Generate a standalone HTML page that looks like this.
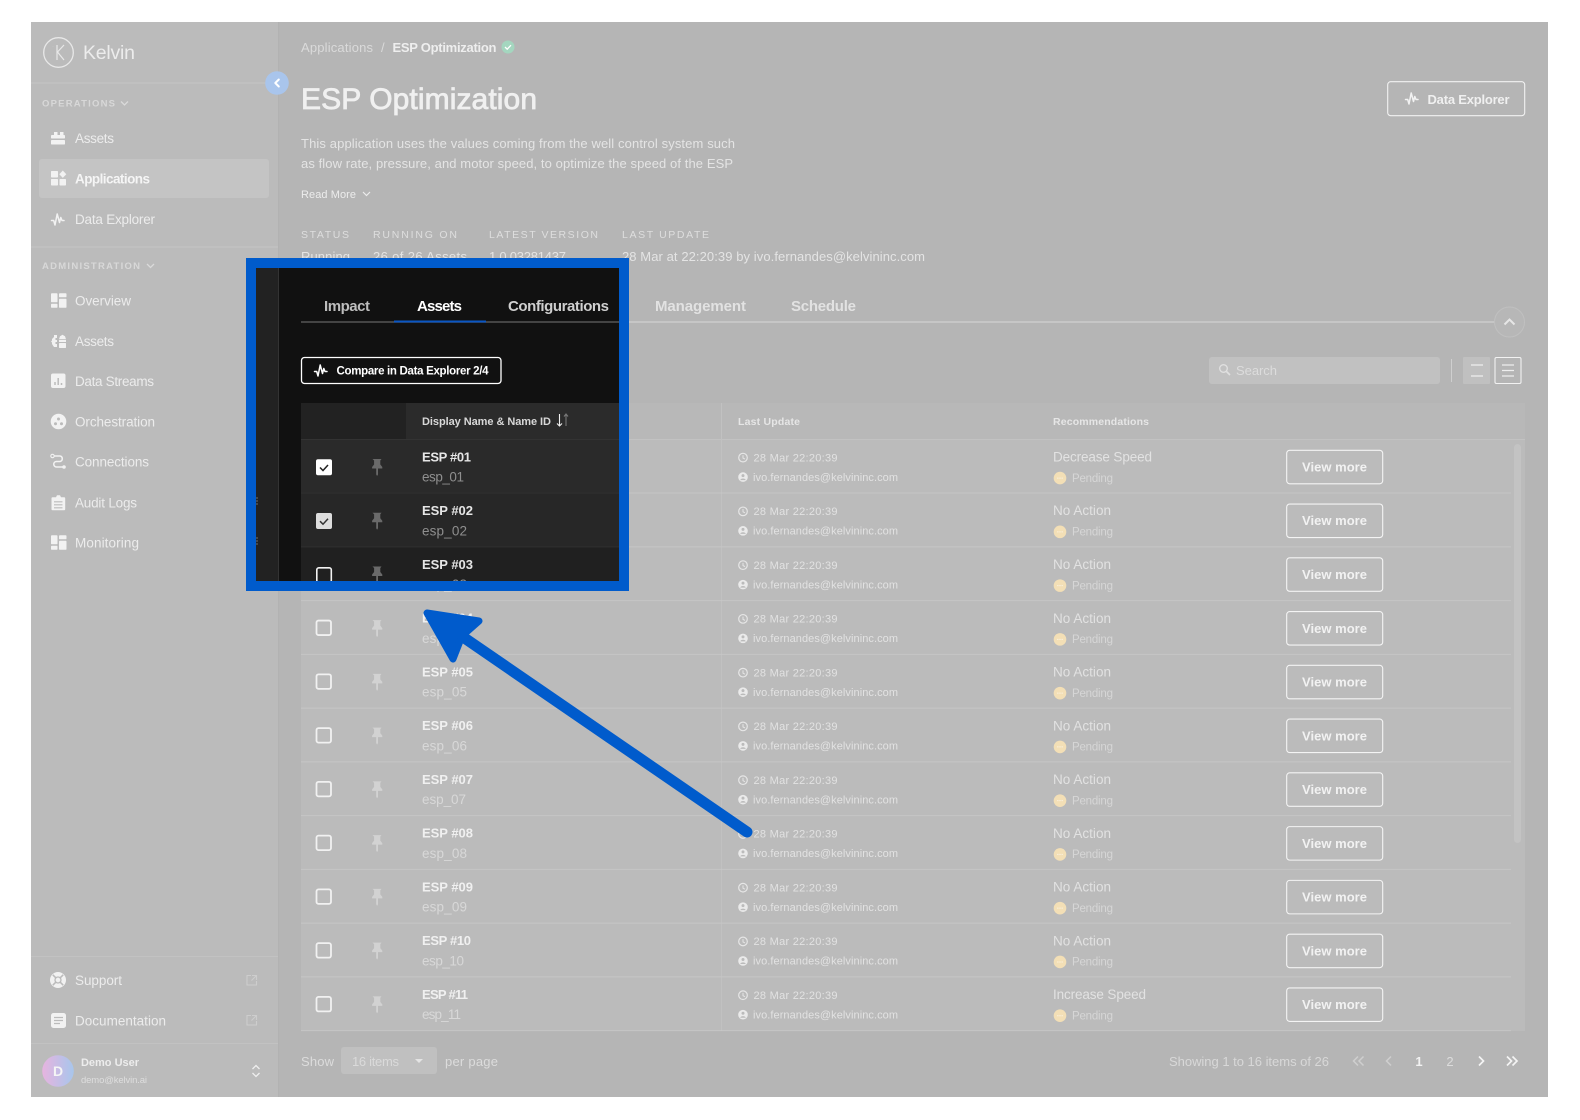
<!DOCTYPE html>
<html><head><meta charset="utf-8"><title>ESP Optimization</title>
<style>
html,body{margin:0;padding:0;background:#fff;width:1580px;height:1120px;overflow:hidden}
svg{display:block}
text{font-family:"Liberation Sans",sans-serif;fill:#e8e8e8;font-size:13px}
.nav{font-size:13.5px;fill:#ececec}
.sec{font-size:9.5px;font-weight:bold;fill:#d8d8d8}
.lbl{font-size:10.5px;fill:#dedede}
.val{font-size:13px;fill:#e4e4e4}
.tab{font-size:15px;font-weight:bold;fill:#e2e2e2}
.n{font-size:13px;font-weight:bold;fill:#f0f0f0}
.i{font-size:13.5px;fill:#d8d8d8}
.d{font-size:11px;fill:#e2e2e2}
.r{font-size:13.5px;fill:#e2e2e2}
.p{font-size:11.5px;fill:#d6d6d6}
.v{font-size:13px;font-weight:bold;fill:#f2f2f2}
.h{font-size:10.5px;font-weight:bold;fill:#e6e6e6}
.dn{font-size:13px;font-weight:bold;fill:#e6e6e6}
.di{font-size:13.5px;fill:#8f8f8f}
.ic{fill:#f2f2f2}
.st{fill:none;stroke:#f2f2f2;stroke-width:1.5;stroke-linecap:round;stroke-linejoin:round}
</style></head><body>
<svg width="1580" height="1120" viewBox="0 0 1580 1120" xmlns="http://www.w3.org/2000/svg">
<defs>
<path id="wave" d="M-7 1.500h2.200l1.300 4.500 2.200-11 2.300 8.500 1.300-5 1.200 3h2" fill="none" stroke-width="1.500" stroke-linecap="round" stroke-linejoin="round"/>
<path id="pinp" d="M-4.500-7.500h9l-1.200 1.500v4l2 2.500v1.500h-4.300v6l-.9 1.500-.9-1.500v-6h-4.100v-1.500l2-2.500v-4z"/>
<g id="quad"><rect x="51" y="-7" width="6.500" height="9" rx=".8"/><rect x="51" y="3.500" width="6.500" height="4" rx=".8"/><rect x="59" y="-7" width="7.500" height="4" rx=".8"/><rect x="59" y="-1.500" width="7.500" height="9" rx=".8"/></g>
<g id="rs">
<rect x="316.500" y="20" width="14.500" height="14.500" rx="2" fill="none" stroke="#f1f1f1" stroke-width="1.800"/>
<use href="#pinp" x="377" y="27" fill="#d2d2d2"/>
<circle cx="743" cy="18.300" r="4.300" fill="none" stroke="#e6e6e6" stroke-width="1.200"/><path d="M743 16v2.800l2 1" fill="none" stroke="#e6e6e6"/>
<circle cx="743" cy="37.800" r="4.800" fill="#eaeaea"/><circle cx="743" cy="36.300" r="1.500" fill="#bbb"/><path d="M740.200 40.800a3 2.500 0 0 1 5.600 0z" fill="#bbb"/>
<circle cx="1060" cy="38.800" r="6.300" fill="#f3dfb6"/><path d="M1057.500 38.800h.8M1059.600 38.800h.8M1061.700 38.800h.8" stroke="#fff"/>
<rect x="1286.700" y="11" width="96" height="33.500" rx="3" fill="none" stroke="#f4f4f4" stroke-width="1.100"/>
<path d="M301 53.760H1511" stroke="#c6c6c6"/>
</g>
<clipPath id="pc"><rect x="256" y="268" width="363" height="313"/></clipPath>
</defs>

<rect x="31" y="22" width="1517" height="1075" fill="#b5b5b5"/>
<!-- sidebar -->
<rect x="31" y="22" width="247" height="1075" fill="#bbb"/>
<path d="M278.500 22V1097" stroke="#b2b2b2"/>
<path d="M31 83H278M31 247H278" stroke="#c2c2c2" stroke-width="1.500"/>
<path d="M31 956.500H278M31 1043.500H278" stroke="#c2c2c2"/>
<circle cx="58.500" cy="52.500" r="14.800" fill="none" stroke="#e8e8e8" stroke-width="1.300"/>
<path d="M57 45v15M64 45l-6.500 7 6.500 8M53 46v.1" fill="none" stroke="#e8e8e8" stroke-width="1.200"/>
<text x="83" y="59" style="font-size:19.500px;fill:#ececec" textLength="52">Kelvin</text>
<circle cx="277" cy="83" r="11.800" fill="#a9c5ec"/>
<path d="M278.800 79.500l-3.500 3.500 3.500 3.500" fill="none" stroke="#fff" stroke-width="2" stroke-linecap="round" stroke-linejoin="round"/>

<text class="sec" x="42" y="106.500" textLength="73">OPERATIONS</text>
<path d="M121 101.500l3.500 3.500 3.500-3.500" fill="none" stroke="#dadada" stroke-width="1.300"/>
<g class="ic"><rect x="54" y="132" width="3.500" height="4"/><rect x="60" y="132" width="3.500" height="4"/><rect x="51" y="135" width="14" height="3.500" rx=".8"/><rect x="51" y="140" width="14" height="4.500" rx=".8"/></g>
<text class="nav" x="75" y="143" textLength="39">Assets</text>
<rect x="39" y="159" width="230" height="39" rx="3" fill="#c4c4c4"/>
<g class="ic"><rect x="51" y="171" width="7" height="6.500" rx=".7"/><rect x="51" y="179" width="7" height="6.500" rx=".7"/><rect x="59.500" y="179" width="6.500" height="6.500" rx=".7"/><path d="M62.800 170.500l3.500 3.700-3.500 3.700-3.500-3.700z"/></g>
<text class="nav" x="75" y="183.500" textLength="75" style="font-weight:bold;fill:#f5f5f5">Applications</text>
<g stroke="#f2f2f2"><use href="#wave" x="58.500" y="219"/></g>
<text class="nav" x="75" y="224" textLength="80">Data Explorer</text>

<text class="sec" x="42" y="269" textLength="98">ADMINISTRATION</text>
<path d="M147 264l3.500 3.500 3.500-3.500" fill="none" stroke="#dadada" stroke-width="1.300"/>
<g class="ic"><use href="#quad" y="300.300"/></g>
<text class="nav" x="75" y="305.300" textLength="56">Overview</text>
<g class="ic"><path d="M54 335h3v3h-1.500v2h1.500v2h-1.500v2h1.500v3h-3l-2-3v-1.500l-1-1 1-1v-1.500l2-2z"/><rect x="59" y="340" width="7" height="2" /><rect x="59" y="343" width="7" height="5" rx=".6"/><path d="M59 339.200l1-3 2.500-1.500 2.500 1.500 1 3z"/></g>
<text class="nav" x="75" y="346" textLength="39">Assets</text>
<rect x="51" y="373.500" width="14.500" height="14.500" rx="2" class="ic"/><path d="M55 385v-3M58.200 385v-7M61.500 385v-2" stroke="#bbb" stroke-width="1.500"/>
<text class="nav" x="75" y="386" textLength="79">Data Streams</text>
<circle cx="58.500" cy="421.500" r="7.800" class="ic"/><circle cx="58.500" cy="419" r="1.500" fill="#bbb"/><circle cx="55.500" cy="423.700" r="1.500" fill="#bbb"/><circle cx="61.500" cy="423.700" r="1.500" fill="#bbb"/>
<text class="nav" x="75" y="426.300" textLength="80">Orchestration</text>
<circle cx="52.500" cy="456" r="1.700" fill="none" stroke="#f2f2f2" stroke-width="1.100"/><circle cx="64" cy="467" r="1.800" class="ic"/><path d="M54.500 456H60a2.800 2.800 0 0 1 0 5.500h-3.500a2.700 2.700 0 0 0 0 5.500h6" class="st"/>
<text class="nav" x="75" y="466.700" textLength="74">Connections</text>
<path d="M52.500 497.300h3.500l1-2h3l1 2h3.200a1 1 0 0 1 1 1v11a1 1 0 0 1-1 1h-11.700a1 1 0 0 1-1-1v-11a1 1 0 0 1 1-1z" class="ic"/><path d="M54 501.800h8.500M54 504.800h8.500M54 507.800h8.500" stroke="#bbb" stroke-width="1.100"/>
<text class="nav" x="75" y="507.300" textLength="62">Audit Logs</text>
<g class="ic"><use href="#quad" y="542.300"/></g>
<text class="nav" x="75" y="547.300" textLength="64">Monitoring</text>

<circle cx="58" cy="980" r="8" class="ic"/><circle cx="58" cy="980" r="3" fill="#f2f2f2" stroke="#bbb" stroke-width="1.300"/><path d="M52.800 974.800l3 3M63.200 974.800l-3 3M52.800 985.200l3-3M63.200 985.200l-3-3" stroke="#bbb" stroke-width="1.500"/>
<text class="nav" x="75" y="985" textLength="47">Support</text>
<rect x="51" y="1013" width="15" height="15" rx="2.500" class="ic"/><path d="M54 1017.500h9M54 1020.500h9M54 1023.500h6" stroke="#bbb" stroke-width="1.300"/>
<text class="nav" x="75" y="1025.300" textLength="91">Documentation</text>
<g fill="none" stroke="#cdcdcd" stroke-width="1.100"><path d="M251 975.500h-4v9.500h9.500v-4M252 975.500h4.500v4.500M256.500 975.500l-5 5"/><path d="M251 1015.500h-4v9.500h9.500v-4M252 1015.500h4.500v4.500M256.500 1015.500l-5 5"/></g>
<defs><linearGradient id="av" x1="0" x2="1"><stop offset="0" stop-color="#e6b4df"/><stop offset="1" stop-color="#a8c6ec"/></linearGradient></defs>
<circle cx="58" cy="1071" r="15.800" fill="url(#av)"/>
<text x="58" y="1076" text-anchor="middle" style="font-size:14px;font-weight:bold;fill:#f5f5f5">D</text>
<text x="81" y="1066" style="font-size:11px;font-weight:bold;fill:#ededed" textLength="58">Demo User</text>
<text x="81" y="1083" style="font-size:9.500px;fill:#dedede" textLength="66">demo@kelvin.ai</text>
<path d="M252.500 1069l3.500-3.500 3.500 3.500M252.500 1073l3.500 3.500 3.500-3.500" fill="none" stroke="#efefef" stroke-width="1.300"/>

<!-- header -->
<text x="301" y="52" textLength="72" style="font-size:13px;fill:#dadada">Applications</text>
<text x="381" y="52" style="font-size:13px;fill:#dadada">/</text>
<text x="392.500" y="52" textLength="104" style="font-size:13px;font-weight:bold;fill:#eee">ESP Optimization</text>
<circle cx="508" cy="47" r="6.500" fill="#a4d6bf"/><path d="M505 47l2.200 2.200 3.800-4" fill="none" stroke="#fff" stroke-width="1.300"/>
<text x="301" y="109" textLength="236" style="font-size:30px;fill:#f0f0f0;stroke:#f0f0f0;stroke-width:.8">ESP Optimization</text>
<text class="val" x="301" y="148" textLength="434">This application uses the values coming from the well control system such</text>
<text class="val" x="301" y="168" textLength="432">as flow rate, pressure, and motor speed, to optimize the speed of the ESP</text>
<text x="301" y="198" textLength="55" style="font-size:11px;fill:#ececec">Read More</text>
<path d="M363 192l3.500 3.500 3.500-3.500" fill="none" stroke="#ececec" stroke-width="1.200"/>
<text class="lbl" x="301" y="238" textLength="48">STATUS</text>
<text class="lbl" x="373" y="238" textLength="84">RUNNING ON</text>
<text class="lbl" x="489" y="238" textLength="109">LATEST VERSION</text>
<text class="lbl" x="622" y="238" textLength="87">LAST UPDATE</text>
<text class="val" x="301" y="261" textLength="49">Running</text>
<text class="val" x="373" y="261" textLength="94">26 of 26 Assets</text>
<text class="val" x="489" y="261" textLength="77">1.0.03281437</text>
<text class="val" x="622" y="261" textLength="303">28 Mar at 22:20:39 by ivo.fernandes@kelvininc.com</text>
<rect x="1387.700" y="81.700" width="137" height="34" rx="3" fill="none" stroke="#f2f2f2" stroke-width="1.100"/>
<g stroke="#f2f2f2"><use href="#wave" x="1412.500" y="98"/></g>
<text x="1427.500" y="104" textLength="82" style="font-size:13px;font-weight:bold;fill:#f0f0f0">Data Explorer</text>

<text class="tab" x="655" y="311" textLength="91">Management</text>
<text class="tab" x="791" y="311" textLength="65">Schedule</text>
<path d="M301 322H1495" stroke="#c8c8c8" stroke-width="1.800"/>
<circle cx="1509.500" cy="322" r="15" fill="#b7b7b7" stroke="#c0c0c0"/>
<path d="M1504.500 324.500l5-5 5 5" fill="none" stroke="#e6e6e6" stroke-width="2"/>

<rect x="1209" y="357" width="231" height="27" rx="3" fill="#c1c1c1"/>
<circle cx="1223.500" cy="368.500" r="3.800" fill="none" stroke="#e0e0e0" stroke-width="1.400"/><path d="M1226.500 371.500l3.500 3.500" stroke="#e0e0e0" stroke-width="1.600"/>
<text x="1236" y="375" textLength="41" style="font-size:13px;fill:#dcdcdc">Search</text>
<path d="M1451.500 359v23" stroke="#cfcfcf"/>
<rect x="1463" y="357" width="27" height="27" rx="1" fill="#c0c0c0"/>
<path d="M1471 365h12M1471 376h12" stroke="#eee" stroke-width="1.200"/>
<rect x="1495" y="357.500" width="26" height="26" rx="1.500" fill="none" stroke="#f2f2f2" stroke-width="1.100"/>
<path d="M1502 365h12M1502 370.500h12M1502 376h12" stroke="#eee" stroke-width="1.200"/>

<!-- table -->
<rect x="301" y="403" width="1224" height="37" fill="#b8b8b8"/>
<rect x="301" y="440" width="1224" height="591" fill="#bbb"/>
<path d="M301 439.500H1525" stroke="#c2c2c2"/>
<path d="M721.500 403V1031" stroke="#c1c1c1"/>
<rect x="1514" y="444" width="7" height="399" rx="3.500" fill="#c3c3c3"/>
<text class="h" x="738" y="425" textLength="62">Last Update</text>
<text class="h" x="1053" y="425" textLength="96">Recommendations</text>

<g transform="translate(0,439.300)"><use href="#rs"/><text class="n" x="422" y="22" textLength="49">ESP #01</text><text class="i" x="422" y="42.200" textLength="42">esp_01</text><text class="d" x="753.500" y="22" textLength="84">28 Mar 22:20:39</text><text class="d" x="753" y="41.500" textLength="145">ivo.fernandes@kelvininc.com</text><text class="r" x="1053" y="22.200" textLength="99">Decrease Speed</text><text class="p" x="1072" y="42.600" textLength="41">Pending</text><text class="v" x="1302" y="32.200" textLength="65">View more</text></g>
<g transform="translate(0,493.060)"><use href="#rs"/><text class="n" x="422" y="22" textLength="51">ESP #02</text><text class="i" x="422" y="42.200" textLength="45">esp_02</text><text class="d" x="753.500" y="22" textLength="84">28 Mar 22:20:39</text><text class="d" x="753" y="41.500" textLength="145">ivo.fernandes@kelvininc.com</text><text class="r" x="1053" y="22.200" textLength="58">No Action</text><text class="p" x="1072" y="42.600" textLength="41">Pending</text><text class="v" x="1302" y="32.200" textLength="65">View more</text></g>
<g transform="translate(0,546.820)"><use href="#rs"/><text class="n" x="422" y="22" textLength="51">ESP #03</text><text class="i" x="422" y="42.200" textLength="45">esp_03</text><text class="d" x="753.500" y="22" textLength="84">28 Mar 22:20:39</text><text class="d" x="753" y="41.500" textLength="145">ivo.fernandes@kelvininc.com</text><text class="r" x="1053" y="22.200" textLength="58">No Action</text><text class="p" x="1072" y="42.600" textLength="41">Pending</text><text class="v" x="1302" y="32.200" textLength="65">View more</text></g>
<g transform="translate(0,600.580)"><use href="#rs"/><text class="n" x="422" y="22" textLength="51">ESP #04</text><text class="i" x="422" y="42.200" textLength="45">esp_04</text><text class="d" x="753.500" y="22" textLength="84">28 Mar 22:20:39</text><text class="d" x="753" y="41.500" textLength="145">ivo.fernandes@kelvininc.com</text><text class="r" x="1053" y="22.200" textLength="58">No Action</text><text class="p" x="1072" y="42.600" textLength="41">Pending</text><text class="v" x="1302" y="32.200" textLength="65">View more</text></g>
<g transform="translate(0,654.340)"><use href="#rs"/><text class="n" x="422" y="22" textLength="51">ESP #05</text><text class="i" x="422" y="42.200" textLength="45">esp_05</text><text class="d" x="753.500" y="22" textLength="84">28 Mar 22:20:39</text><text class="d" x="753" y="41.500" textLength="145">ivo.fernandes@kelvininc.com</text><text class="r" x="1053" y="22.200" textLength="58">No Action</text><text class="p" x="1072" y="42.600" textLength="41">Pending</text><text class="v" x="1302" y="32.200" textLength="65">View more</text></g>
<g transform="translate(0,708.100)"><use href="#rs"/><text class="n" x="422" y="22" textLength="51">ESP #06</text><text class="i" x="422" y="42.200" textLength="45">esp_06</text><text class="d" x="753.500" y="22" textLength="84">28 Mar 22:20:39</text><text class="d" x="753" y="41.500" textLength="145">ivo.fernandes@kelvininc.com</text><text class="r" x="1053" y="22.200" textLength="58">No Action</text><text class="p" x="1072" y="42.600" textLength="41">Pending</text><text class="v" x="1302" y="32.200" textLength="65">View more</text></g>
<g transform="translate(0,761.860)"><use href="#rs"/><text class="n" x="422" y="22" textLength="51">ESP #07</text><text class="i" x="422" y="42.200" textLength="44">esp_07</text><text class="d" x="753.500" y="22" textLength="84">28 Mar 22:20:39</text><text class="d" x="753" y="41.500" textLength="145">ivo.fernandes@kelvininc.com</text><text class="r" x="1053" y="22.200" textLength="58">No Action</text><text class="p" x="1072" y="42.600" textLength="41">Pending</text><text class="v" x="1302" y="32.200" textLength="65">View more</text></g>
<g transform="translate(0,815.620)"><use href="#rs"/><text class="n" x="422" y="22" textLength="51">ESP #08</text><text class="i" x="422" y="42.200" textLength="45">esp_08</text><text class="d" x="753.500" y="22" textLength="84">28 Mar 22:20:39</text><text class="d" x="753" y="41.500" textLength="145">ivo.fernandes@kelvininc.com</text><text class="r" x="1053" y="22.200" textLength="58">No Action</text><text class="p" x="1072" y="42.600" textLength="41">Pending</text><text class="v" x="1302" y="32.200" textLength="65">View more</text></g>
<g transform="translate(0,869.380)"><use href="#rs"/><text class="n" x="422" y="22" textLength="51">ESP #09</text><text class="i" x="422" y="42.200" textLength="45">esp_09</text><text class="d" x="753.500" y="22" textLength="84">28 Mar 22:20:39</text><text class="d" x="753" y="41.500" textLength="145">ivo.fernandes@kelvininc.com</text><text class="r" x="1053" y="22.200" textLength="58">No Action</text><text class="p" x="1072" y="42.600" textLength="41">Pending</text><text class="v" x="1302" y="32.200" textLength="65">View more</text></g>
<g transform="translate(0,923.140)"><use href="#rs"/><text class="n" x="422" y="22" textLength="49">ESP #10</text><text class="i" x="422" y="42.200" textLength="42">esp_10</text><text class="d" x="753.500" y="22" textLength="84">28 Mar 22:20:39</text><text class="d" x="753" y="41.500" textLength="145">ivo.fernandes@kelvininc.com</text><text class="r" x="1053" y="22.200" textLength="58">No Action</text><text class="p" x="1072" y="42.600" textLength="41">Pending</text><text class="v" x="1302" y="32.200" textLength="65">View more</text></g>
<g transform="translate(0,976.900)"><use href="#rs"/><text class="n" x="422" y="22" textLength="46">ESP #11</text><text class="i" x="422" y="42.200" textLength="39">esp_11</text><text class="d" x="753.500" y="22" textLength="84">28 Mar 22:20:39</text><text class="d" x="753" y="41.500" textLength="145">ivo.fernandes@kelvininc.com</text><text class="r" x="1053" y="22.200" textLength="93">Increase Speed</text><text class="p" x="1072" y="42.600" textLength="41">Pending</text><text class="v" x="1302" y="32.200" textLength="65">View more</text></g>

<!-- footer -->
<text x="301" y="1066" textLength="33" style="font-size:13px;fill:#dcdcdc">Show</text>
<rect x="341" y="1047" width="96" height="27" rx="3" fill="#c0c0c0"/>
<text x="352" y="1066" textLength="47" style="font-size:13px;fill:#dadada">16 items</text>
<path d="M415 1059h8l-4 4z" fill="#e4e4e4"/>
<text x="445" y="1066" textLength="53" style="font-size:13px;fill:#dcdcdc">per page</text>
<text x="1169" y="1066" textLength="160" style="font-size:13px;fill:#d8d8d8">Showing 1 to 16 items of 26</text>
<path d="M1358 1056.500l-4.500 4.500 4.500 4.500M1363.500 1056.500l-4.500 4.500 4.500 4.500M1391 1056.500l-4.500 4.500 4.500 4.500" fill="none" stroke="#cfcfcf" stroke-width="1.500"/>
<text x="1419" y="1066" text-anchor="middle" style="font-size:13px;font-weight:bold;fill:#f2f2f2">1</text>
<text x="1450" y="1066" text-anchor="middle" style="font-size:13px;fill:#dcdcdc">2</text>
<path d="M1479 1056.500l4.500 4.500-4.500 4.500M1507 1056.500l4.500 4.500-4.500 4.500M1512.500 1056.500l4.500 4.500-4.500 4.500" fill="none" stroke="#f4f4f4" stroke-width="1.700"/>

<!-- highlighted overlay -->
<rect x="246" y="258" width="383" height="333" fill="#005bcc"/>
<g clip-path="url(#pc)">
<rect x="256" y="268" width="363" height="313" fill="#111"/>
<rect x="256" y="268" width="22" height="313" fill="#222"/>
<path d="M278.500 268V581" stroke="#333"/>
<path d="M257 497v8M257 537v8" stroke="#555" stroke-width="1.500" stroke-dasharray="2 1"/>
<text class="tab" x="324" y="311" textLength="46" style="fill:#bdbdbd">Impact</text>
<text class="tab" x="417" y="311" textLength="45" style="fill:#fff">Assets</text>
<text class="tab" x="508" y="311" textLength="101" style="fill:#cfcfcf">Configurations</text>
<path d="M301 322H619" stroke="#555" stroke-width="1.500"/>
<path d="M394 321.500H486" stroke="#0a56c4" stroke-width="2"/>
<rect x="301.500" y="357.500" width="199.500" height="26" rx="3" fill="none" stroke="#fff" stroke-width="1.300"/>
<g stroke="#fff"><use href="#wave" x="321.500" y="370"/></g>
<text x="336.500" y="374.500" textLength="152" style="font-size:11.500px;font-weight:bold;fill:#fff">Compare in Data Explorer 2/4</text>
<rect x="301" y="403" width="105" height="36" fill="#222"/>
<rect x="406" y="403" width="213" height="36" fill="#2b2b2b"/>
<text x="422" y="425" textLength="129" style="font-size:11px;font-weight:bold;fill:#d8d8d8">Display Name &amp; Name ID</text>
<path d="M559.500 414v12m-2.500-2.500l2.500 2.500 2.500-2.500" fill="none" stroke="#f0f0f0" stroke-width="1.100"/>
<path d="M566 426v-12m-2 2.500l2-2.500 2 2.500" fill="none" stroke="#777" stroke-width="1.100"/>
<rect x="301" y="439.300" width="318" height="53.800" fill="#2a2a2a"/>
<rect x="301" y="493.100" width="318" height="53.800" fill="#272727"/>
<rect x="301" y="546.900" width="318" height="34.100" fill="#202020"/>
<path d="M301 439.500H619" stroke="#333"/><path d="M301 493.100H619M301 546.900H619" stroke="#2f2f2f"/>
<rect x="316" y="459.300" width="16" height="16" rx="2" fill="#fff"/>
<path d="M320 467.500l3 3 5-5.500" fill="none" stroke="#222" stroke-width="1.500"/>
<rect x="316" y="513" width="16" height="16" rx="2" fill="#ddd"/>
<path d="M320 521.200l3 3 5-5.500" fill="none" stroke="#333" stroke-width="1.500"/>
<rect x="316.800" y="567.800" width="14.500" height="14.500" rx="2" fill="none" stroke="#f2f2f2" stroke-width="1.600"/>
<use href="#pinp" x="377" y="466.500" fill="#6a6a6a"/>
<use href="#pinp" x="377" y="520.300" fill="#6a6a6a"/>
<use href="#pinp" x="377" y="574" fill="#6a6a6a"/>
<text class="dn" x="422" y="461.300" textLength="49">ESP #01</text><text class="di" x="422" y="481.500" textLength="42">esp_01</text>
<text class="dn" x="422" y="515.100" textLength="51">ESP #02</text><text class="di" x="422" y="535.300" textLength="45">esp_02</text>
<text class="dn" x="422" y="568.800" textLength="51">ESP #03</text><text class="di" x="422" y="589" textLength="45">esp_03</text>
</g>

<!-- arrow -->
<path d="M747 832L463 637" stroke="#005bcc" stroke-width="11" stroke-linecap="round"/>
<path d="M427 613L479 621L462 636L453 659Z" fill="#005bcc" stroke="#005bcc" stroke-width="7" stroke-linejoin="round"/>
</svg>
</body></html>
